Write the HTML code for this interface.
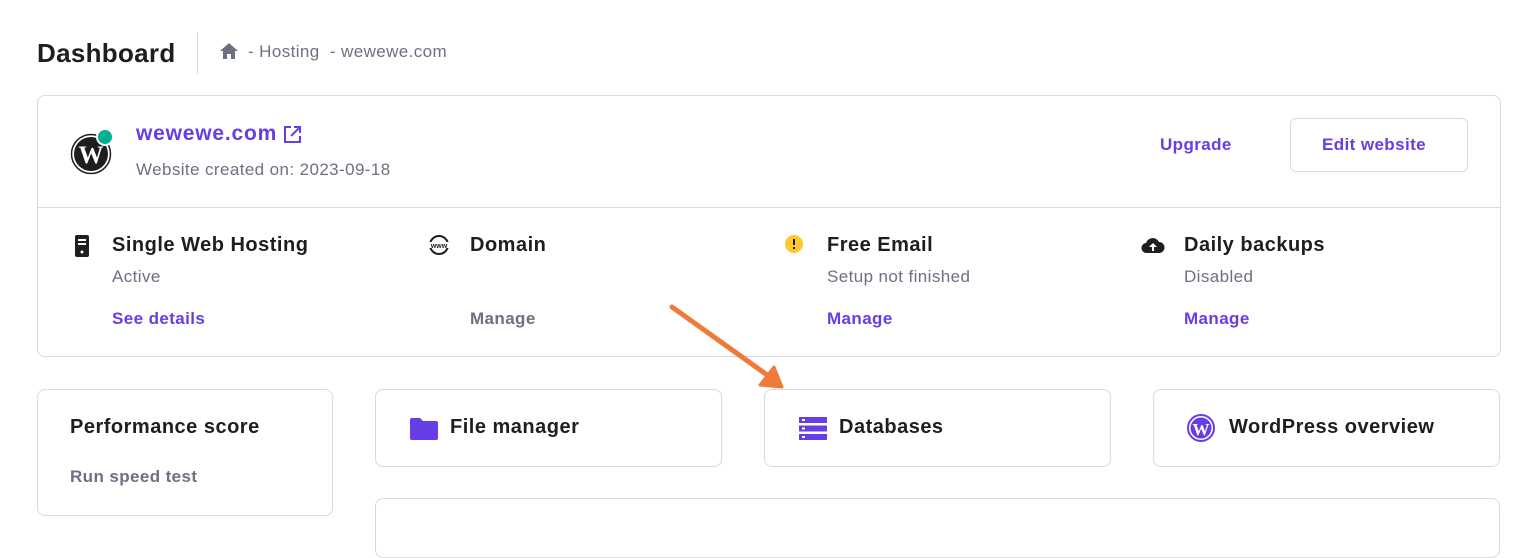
<!DOCTYPE html>
<html><head><meta charset="utf-8"><style>
*{margin:0;padding:0;box-sizing:border-box}
body{width:1536px;height:525px;background:#fff;font-family:"Liberation Sans",sans-serif;color:#1d1e20;position:relative;overflow:hidden}
.a{position:absolute;white-space:nowrap}
.card{position:absolute;border:1px solid #d8dae0;border-radius:8px;background:#fff}
.t{font-size:20px;font-weight:bold;color:#1d1e20;letter-spacing:0.5px}
.g{font-size:17px;color:#6d7081;letter-spacing:0.4px}
.p{font-size:17px;font-weight:bold;color:#673de6;letter-spacing:0.4px}
</style></head><body>
<div class="a" style="left:37px;top:38px;font-size:26px;font-weight:bold;letter-spacing:0.3px">Dashboard</div>
<div class="a" style="left:197px;top:32px;width:1px;height:42px;background:#d8dae0"></div>
<svg class="a" style="left:219px;top:42px" width="20" height="18" viewBox="0 0 20 18"><path d="M10 1 L1 9 H4 V17 H8 V12 H12 V17 H16 V9 H19Z" fill="#6d7081"/></svg>
<div class="a g" style="left:248px;top:42px">- Hosting &nbsp;- wewewe.com</div>

<div class="card" style="left:37px;top:95px;width:1464px;height:262px"></div>
<div class="a" style="left:38px;top:207px;width:1462px;height:1px;background:#d8dae0"></div>
<svg class="a" style="left:70px;top:133px" width="42" height="42" viewBox="0 0 42 42"><circle cx="21" cy="21" r="19.5" fill="#fff" stroke="#1d1e20" stroke-width="1.5"/><circle cx="21" cy="21" r="17" fill="#1d1e20"/><text x="21" y="30" font-size="25" font-family="Liberation Serif" font-weight="bold" fill="#fff" text-anchor="middle">W</text></svg>
<div class="a" style="left:96px;top:128px;width:18px;height:18px;border-radius:50%;background:#00b090;border:2px solid #fff"></div>
<div class="a" style="left:136px;top:122px;font-size:21px;font-weight:bold;color:#673de6;letter-spacing:0.8px">wewewe.com</div>
<svg class="a" style="left:283px;top:125px" width="19" height="19" viewBox="0 0 19 19" fill="none" stroke="#673de6" stroke-width="2"><path d="M8 2H2V17H17V11M11 2H17V8M17 2L8 11"/></svg>
<div class="a g" style="left:136px;top:160px">Website created on: 2023-09-18</div>
<div class="a p" style="left:1160px;top:135px">Upgrade</div>
<div class="card" style="left:1290px;top:118px;width:178px;height:54px;border-radius:6px"></div>
<div class="a p" style="left:1322px;top:135px">Edit website</div>

<svg class="a" style="left:75px;top:235px" width="14" height="22" viewBox="0 0 14 22"><rect x="0" y="0" width="14" height="22" rx="2" fill="#1d1e20"/><rect x="3" y="4" width="8" height="2" fill="#fff"/><rect x="3" y="8" width="8" height="2" fill="#fff"/><circle cx="7" cy="17" r="1.5" fill="#fff"/></svg>
<div class="a t" style="left:112px;top:234px">Single Web Hosting</div>
<div class="a g" style="left:112px;top:267px">Active</div>
<div class="a p" style="left:112px;top:309px">See details</div>

<svg class="a" style="left:428px;top:234px" width="22" height="22" viewBox="0 0 22 22"><circle cx="11" cy="11" r="9" fill="none" stroke="#1d1e20" stroke-width="2"/><rect x="0" y="8" width="22" height="6" fill="#fff"/><text x="11" y="14" font-size="7" font-weight="bold" text-anchor="middle" fill="#1d1e20">www</text></svg>
<div class="a t" style="left:470px;top:234px">Domain</div>
<div class="a" style="left:470px;top:309px;font-size:17px;font-weight:bold;color:#6d7081;letter-spacing:0.4px">Manage</div>

<svg class="a" style="left:784px;top:234px" width="20" height="20" viewBox="0 0 20 20"><circle cx="10" cy="10" r="9" fill="#ffc830"/><rect x="9" y="5" width="2" height="6" fill="#1d1e20"/><rect x="9" y="13" width="2" height="2" fill="#1d1e20"/></svg>
<div class="a t" style="left:827px;top:234px">Free Email</div>
<div class="a g" style="left:827px;top:267px">Setup not finished</div>
<div class="a p" style="left:827px;top:309px">Manage</div>

<svg class="a" style="left:1141px;top:236px" width="24" height="18" viewBox="0 0 24 18"><path d="M6 17A5 5 0 0 1 5 7 7 7 0 0 1 18 6 5.5 5.5 0 0 1 18 17Z" fill="#1d1e20"/><path d="M12 7L8 11H11V15H13V11H16Z" fill="#fff"/></svg>
<div class="a t" style="left:1184px;top:234px">Daily backups</div>
<div class="a g" style="left:1184px;top:267px">Disabled</div>
<div class="a p" style="left:1184px;top:309px">Manage</div>

<div class="card" style="left:37px;top:389px;width:296px;height:127px"></div>
<div class="a t" style="left:70px;top:416px">Performance score</div>
<div class="a" style="left:70px;top:467px;font-size:17px;font-weight:bold;color:#6d7081;letter-spacing:0.4px">Run speed test</div>

<div class="card" style="left:375px;top:389px;width:347px;height:78px"></div>
<svg class="a" style="left:410px;top:418px" width="28" height="22" viewBox="0 0 28 22"><path d="M0 2Q0 0 2 0H10L13 3H26Q28 3 28 5V20Q28 22 26 22H2Q0 22 0 20Z" fill="#673de6"/></svg>
<div class="a t" style="left:450px;top:416px">File manager</div>

<div class="card" style="left:764px;top:389px;width:347px;height:78px"></div>
<svg class="a" style="left:799px;top:417px" width="28" height="23" viewBox="0 0 28 23" fill="#673de6"><rect y="0" width="28" height="6"/><rect y="8.5" width="28" height="6"/><rect y="17" width="28" height="6"/><rect x="3" y="2" width="3" height="2" fill="#fff"/><rect x="3" y="10.5" width="3" height="2" fill="#fff"/><rect x="3" y="19" width="3" height="2" fill="#fff"/></svg>
<div class="a t" style="left:839px;top:416px">Databases</div>

<div class="card" style="left:1153px;top:389px;width:347px;height:78px"></div>
<svg class="a" style="left:1187px;top:414px" width="28" height="28" viewBox="0 0 28 28"><circle cx="14" cy="14" r="13" fill="#fff" stroke="#673de6" stroke-width="2"/><circle cx="14" cy="14" r="10.5" fill="#673de6"/><text x="14" y="21" font-size="17" font-family="Liberation Serif" font-weight="bold" fill="#fff" text-anchor="middle">W</text></svg>
<div class="a t" style="left:1229px;top:416px">WordPress overview</div>

<div class="card" style="left:375px;top:498px;width:1125px;height:60px"></div>

<svg class="a" style="left:660px;top:295px" width="140" height="105" viewBox="0 0 140 105"><path d="M12 12 L110 82" stroke="#f07a3a" stroke-width="5" stroke-linecap="round"/><path d="M122 92 L100 90 L114 72Z" fill="#f07a3a" stroke="#f07a3a" stroke-width="3" stroke-linejoin="round"/></svg>
</body></html>
